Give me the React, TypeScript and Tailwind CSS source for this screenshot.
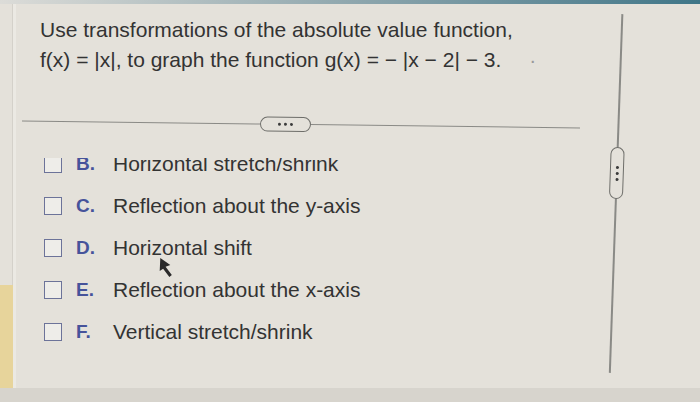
import React from "react";

/* ── Data ── */
const options = [
  { key: "B", text: "Horizontal stretch/shrink" },
  { key: "C", text: "Reflection about the y-axis" },
  { key: "D", text: "Horizontal shift" },
  { key: "E", text: "Reflection about the x-axis" },
  { key: "F", text: "Vertical stretch/shrink" },
];

/* ── Helpers ── */
function Dots({ vertical }: { vertical?: boolean }) {
  return (
    <div className={`flex items-center justify-center gap-[3px] ${vertical ? "flex-col" : "flex-row"}`}>
      <span className="h-[3px] w-[3px] rounded-full bg-[#3b3b3b]" />
      <span className="h-[3px] w-[3px] rounded-full bg-[#3b3b3b]" />
      <span className="h-[3px] w-[3px] rounded-full bg-[#3b3b3b]" />
    </div>
  );
}

function OptionRow({ letter, text }: { letter: string; text: string }) {
  return (
    <div className="flex h-[42px] items-center">
      <span className="ml-[28px] h-[18px] w-[18px] shrink-0 border-[1.5px] border-[#6c7399] bg-[#eeede9]" />
      <span className="ml-[14px] w-[37px] text-[19px] font-bold text-[#46539a]">{letter}.</span>
      <span className="text-[21px] text-[#333333]">{text}</span>
    </div>
  );
}

/* ── Page ── */
export default function App() {
  return (
    <div className="relative flex h-[402px] w-[700px] flex-col overflow-hidden bg-[#e4e1da] font-['Liberation_Sans',Arial,sans-serif]">
      {/* top strip */}
      <div className="h-[4px] w-full bg-gradient-to-r from-[#dcdcd8] via-[#8fa7ae] to-[#3f7688]" />

      <div className="flex flex-1">
        {/* left edge */}
        <div className="flex w-[16px] flex-col border-r-[3px] border-[#ebe9e3]">
          <div className="flex-1 border-r border-[#d4d1ca]" />
          <div className="h-[103px] bg-[#e7d49b]" />
        </div>

        {/* main panel */}
        <div className="flex w-[593px] flex-col">
          <div className="pl-[24px] pt-[11px] text-[21px] leading-[30px] text-[#333333]">
            <p>Use transformations of the absolute value function,</p>
            <p>
              f(x) = |x|, to graph the function g(x) = − |x − 2| − 3.
              <span className="ml-[28px] text-[#9a9a9a]">·</span>
            </p>
          </div>

          <div className="ml-[6px] mr-[29px] mt-[42px] flex rotate-[0.7deg] items-center">
            <div className="h-[1.5px] flex-[238] bg-[#8a8a86]" />
            <div className="flex h-[15px] w-[51px] items-center justify-center rounded-full border-[1.5px] border-[#6e6e6a]">
              <Dots />
            </div>
            <div className="h-[1.5px] flex-[269] bg-[#8a8a86]" />
          </div>

          <div className="mt-[26px] flex-1 overflow-hidden">
            <div className="-mt-[15px]">
              {options.map((o) => (
                <OptionRow key={o.key} letter={o.key} text={o.text} />
              ))}
            </div>
          </div>
        </div>

        {/* vertical divider */}
        <div className="flex w-[14px] rotate-[2deg] flex-col items-center pt-[10px]">
          <div className="h-[133px] w-[1.5px] bg-[#8a8a86]" />
          <div className="flex h-[52px] w-[14px] items-center justify-center rounded-full border-[1.5px] border-[#6e6e6a]">
            <Dots vertical />
          </div>
          <div className="h-[174px] w-[1.5px] bg-[#8a8a86]" />
        </div>

        <div className="flex-1" />
      </div>

      {/* bottom strip */}
      <div className="h-[14px] w-full bg-[#d7d4cd]" />

      {/* mouse pointer */}
      <svg className="absolute left-[158px] top-[256px]" width="18" height="24" viewBox="0 0 18 24">
        <path d="M6 1 L1 13 L5 12 L8 22 L11 21 L8 11 L13 11 Z" fill="#2a2a2a" transform="rotate(-20 7 12)" />
      </svg>
    </div>
  );
}
